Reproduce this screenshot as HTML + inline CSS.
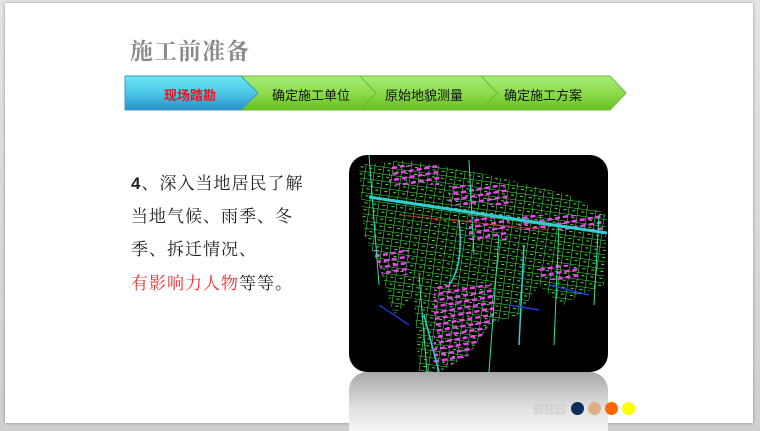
<!DOCTYPE html>
<html><head><meta charset="utf-8"><style>
body{margin:0;width:760px;height:431px;background:linear-gradient(#e4e4e4,#cfcfcf);position:relative;overflow:hidden;font-family:"Liberation Sans","Noto Sans CJK SC",sans-serif}
.slide{position:absolute;left:5px;top:3px;width:748px;height:420px;background:#fff;box-shadow:0 0 3px rgba(0,0,0,.35)}
.title{position:absolute;left:130px;top:33px;font-size:23px;font-weight:bold;color:#8a8a8a;letter-spacing:1px;font-family:"Noto Serif CJK SC","Noto Sans CJK SC",serif}
.t{position:absolute;left:131px;font-size:17px;color:#222;font-family:"Liberation Serif","Noto Serif CJK SC",serif;letter-spacing:1px}
.lab{position:absolute;top:85px;font-size:13px;color:#111}
.dot{position:absolute;top:402px;width:13px;height:13px;border-radius:50%}
</style></head><body>
<div class="slide"></div>
<div class="title">施工前准备</div>
<svg style="position:absolute;left:0;top:0" width="760" height="431">
<defs>
<linearGradient id="b" x1="0" y1="0" x2="0" y2="1"><stop offset="0" stop-color="#6ee6f4"/><stop offset=".5" stop-color="#4cc8e6"/><stop offset="1" stop-color="#2a8fc8"/></linearGradient>
<linearGradient id="g" x1="0" y1="0" x2="0" y2="1"><stop offset="0" stop-color="#a8ec78"/><stop offset=".5" stop-color="#8cdc4c"/><stop offset="1" stop-color="#66c020"/></linearGradient>
</defs>
<polygon points="481,76 610,76 626,93 610,110 481,110 497,93" fill="url(#g)" stroke="#6cb83a" stroke-width="1"/>
<polygon points="360,76 481,76 497,93 481,110 360,110 376,93" fill="url(#g)" stroke="#6cb83a" stroke-width="1"/>
<polygon points="241,76 360,76 376,93 360,110 241,110 257,93" fill="url(#g)" stroke="#6cb83a" stroke-width="1"/>
<polygon points="125,76 241,76 258,93 241,110 125,110" fill="url(#b)" stroke="#3a9ac0" stroke-width="1"/>
</svg>
<div class="lab" style="left:164px;color:#e8141c;font-weight:bold">现场踏勘</div>
<div class="lab" style="left:272px">确定施工单位</div>
<div class="lab" style="left:385px">原始地貌测量</div>
<div class="lab" style="left:504px">确定施工方案</div>
<div class="t" style="top:169px"><span style="font-family:'Liberation Sans';font-weight:bold">4</span>、深入当地居民了解</div>
<div class="t" style="top:202px">当地气候、雨季、冬</div>
<div class="t" style="top:235px">季、拆迁情况、</div>
<div class="t" style="top:269px"><span style="color:#f03030">有影响力人物</span>等等。</div>
<div style="position:absolute;left:349px;top:372px;width:259px;height:59px;border-radius:18px 18px 0 0;background:linear-gradient(#a8a8a8,#e0e0e0 60%,#f4f4f4)"></div>
<svg style="position:absolute;left:349px;top:155px;border-radius:18px;background:#000" width="259" height="217">
<defs>
<pattern id="gp" width="9" height="7" patternUnits="userSpaceOnUse" patternTransform="rotate(8)">
<path d="M0 0H9M0 0V7M4 3h3" stroke="#44f040" stroke-width="1.1" fill="none"/>
</pattern>
<pattern id="mp" width="8" height="6" patternUnits="userSpaceOnUse" patternTransform="rotate(-10)">
<rect x="0" y="1" width="5" height="2.5" fill="#f040f0"/>
</pattern>
<clipPath id="city"><path d="M10 10 L60 5 L140 20 L220 40 L258 60 L255 130 L230 140 L215 150 L200 140 L190 130 L170 160 L140 170 L120 200 L90 217 L70 217 L65 140 L45 160 L30 110 L15 80 Z"/></clipPath>
</defs>
<g clip-path="url(#city)">
<rect width="259" height="217" fill="url(#gp)"/>
<g fill="url(#mp)">
<rect x="40" y="10" width="50" height="20"/><rect x="100" y="30" width="60" height="20"/><rect x="170" y="60" width="85" height="15"/><rect x="85" y="130" width="60" height="80"/><rect x="25" y="95" width="35" height="25"/><rect x="190" y="110" width="40" height="15"/><rect x="120" y="60" width="40" height="25"/>
</g>
</g>
<g fill="none">
<path d="M20 0 L30 130 M120 5 L125 100 M250 60 L245 150 M150 80 L140 217 M210 70 L205 190 M70 120 L78 217" stroke="#2ce8a0" stroke-width="1"/>
<path d="M20 42 L258 78" stroke="#30d0d0" stroke-width="3"/>
<path d="M110 65 Q115 110 100 130 M175 90 L170 190 M75 160 L90 217" stroke="#30d0d0" stroke-width="1.5"/>
<path d="M30 150 L60 170 M200 130 L240 140 M160 150 L190 155" stroke="#2040ff" stroke-width="1.2"/>
<path d="M50 60 L200 75" stroke="#e03030" stroke-width=".8"/>
</g>
</svg>
<div style="position:absolute;left:533px;top:401px;font-size:11px;color:#c8c8c8">碧桂园</div>
<div class="dot" style="left:571px;background:#0c2c5a"></div>
<div class="dot" style="left:588px;background:#deae84"></div>
<div class="dot" style="left:605px;background:#ff6600"></div>
<div class="dot" style="left:622px;background:#ffff00"></div>
</body></html>
